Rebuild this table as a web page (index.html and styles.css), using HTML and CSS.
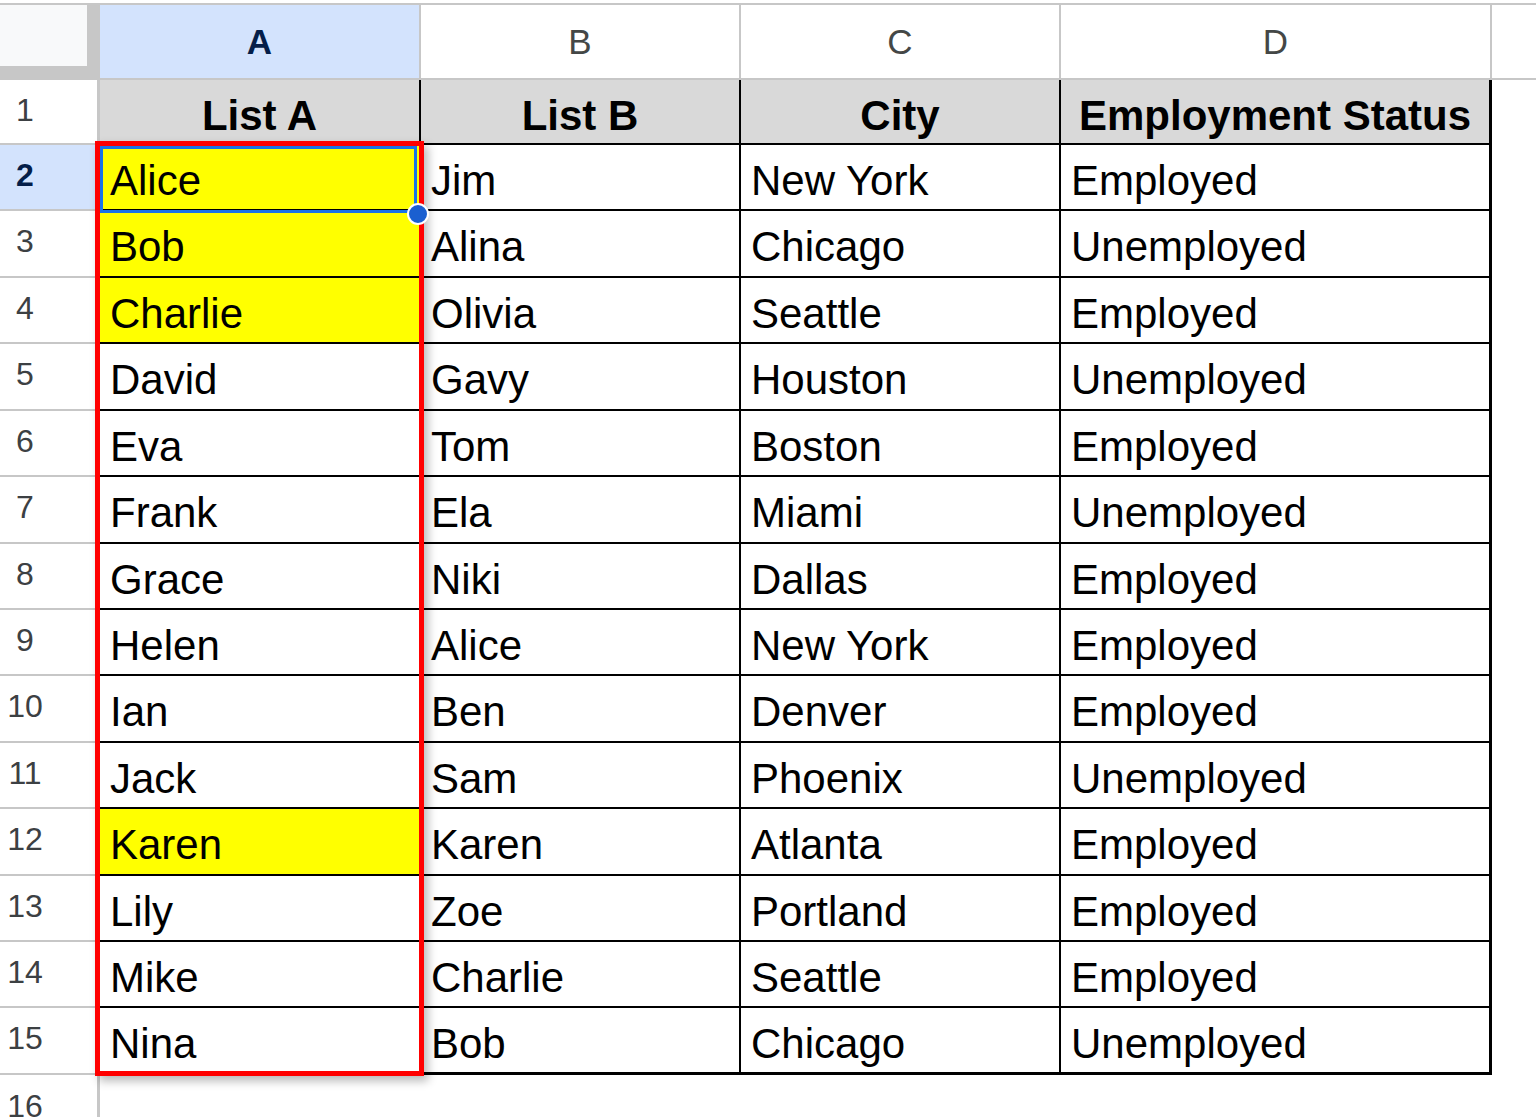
FILE: index.html
```html
<!DOCTYPE html>
<html>
<head>
<meta charset="utf-8">
<link rel="stylesheet" href="styles.css">
</head>
<body>
<div class="sheet">
  <div class="corner"><div class="corner-box"></div></div>
  <div class="ch sel">A</div>
  <div class="ch">B</div>
  <div class="ch">C</div>
  <div class="ch">D</div>
  <div class="ch e"></div>

  <div class="rh">1</div>
  <div class="c h">List A</div>
  <div class="c h">List B</div>
  <div class="c h">City</div>
  <div class="c h d">Employment Status</div>
  <div class="e"></div>

  <div class="rh sel">2</div>
  <div class="c y">Alice</div>
  <div class="c">Jim</div>
  <div class="c">New York</div>
  <div class="c d">Employed</div>
  <div class="e"></div>

  <div class="rh">3</div>
  <div class="c y">Bob</div>
  <div class="c">Alina</div>
  <div class="c">Chicago</div>
  <div class="c d">Unemployed</div>
  <div class="e"></div>

  <div class="rh">4</div>
  <div class="c y">Charlie</div>
  <div class="c">Olivia</div>
  <div class="c">Seattle</div>
  <div class="c d">Employed</div>
  <div class="e"></div>

  <div class="rh">5</div>
  <div class="c">David</div>
  <div class="c">Gavy</div>
  <div class="c">Houston</div>
  <div class="c d">Unemployed</div>
  <div class="e"></div>

  <div class="rh">6</div>
  <div class="c">Eva</div>
  <div class="c">Tom</div>
  <div class="c">Boston</div>
  <div class="c d">Employed</div>
  <div class="e"></div>

  <div class="rh">7</div>
  <div class="c">Frank</div>
  <div class="c">Ela</div>
  <div class="c">Miami</div>
  <div class="c d">Unemployed</div>
  <div class="e"></div>

  <div class="rh">8</div>
  <div class="c">Grace</div>
  <div class="c">Niki</div>
  <div class="c">Dallas</div>
  <div class="c d">Employed</div>
  <div class="e"></div>

  <div class="rh">9</div>
  <div class="c">Helen</div>
  <div class="c">Alice</div>
  <div class="c">New York</div>
  <div class="c d">Employed</div>
  <div class="e"></div>

  <div class="rh">10</div>
  <div class="c">Ian</div>
  <div class="c">Ben</div>
  <div class="c">Denver</div>
  <div class="c d">Employed</div>
  <div class="e"></div>

  <div class="rh">11</div>
  <div class="c">Jack</div>
  <div class="c">Sam</div>
  <div class="c">Phoenix</div>
  <div class="c d">Unemployed</div>
  <div class="e"></div>

  <div class="rh">12</div>
  <div class="c y">Karen</div>
  <div class="c">Karen</div>
  <div class="c">Atlanta</div>
  <div class="c d">Employed</div>
  <div class="e"></div>

  <div class="rh">13</div>
  <div class="c">Lily</div>
  <div class="c">Zoe</div>
  <div class="c">Portland</div>
  <div class="c d">Employed</div>
  <div class="e"></div>

  <div class="rh">14</div>
  <div class="c">Mike</div>
  <div class="c">Charlie</div>
  <div class="c">Seattle</div>
  <div class="c d">Employed</div>
  <div class="e"></div>

  <div class="rh">15</div>
  <div class="c last">Nina</div>
  <div class="c last">Bob</div>
  <div class="c last">Chicago</div>
  <div class="c d last">Unemployed</div>
  <div class="e"></div>

  <div class="rh end">16</div>
  <div class="e"></div>
  <div class="e"></div>
  <div class="e"></div>
  <div class="e"></div>
  <div class="e"></div>
</div>

<div class="range-box"></div>
<div class="active-cell"></div>
<div class="fill-handle"></div>
</body>
</html>
```

FILE: styles.css
```css
html, body {
  margin: 0;
  padding: 0;
  background: #ffffff;
}

body {
  position: relative;
  width: 1536px;
  height: 1117px;
  overflow: hidden;
  font-family: "Liberation Sans", Arial, sans-serif;
  padding-top: 3px;
  box-sizing: border-box;
}

.sheet {
  display: grid;
  grid-template-columns: 100px 321px 320px 320px 431px 1fr;
  grid-template-rows: 77px 65px repeat(14, 66.43px) 1fr;
  height: 1114px;
}

.sheet > div {
  box-sizing: border-box;
  min-width: 0;
  overflow: hidden;
  white-space: nowrap;
}

.corner {
  background: #c7c7c7;
  border-top: 2px solid #c7c7c7;
}

.corner-box {
  width: 87px;
  height: 61px;
  background: #f8f9fa;
}

.ch {
  display: flex;
  align-items: center;
  justify-content: center;
  border-top: 2px solid #c7c7c7;
  border-bottom: 2px solid #c7c7c7;
  border-right: 2px solid #c7c7c7;
  background: #ffffff;
  color: #444746;
  font-size: 35px;
  line-height: 35px;
}

.ch.sel {
  background: #d3e3fd;
  color: #041e49;
  font-weight: bold;
}

.ch.e {
  border-right: none;
}

.rh {
  display: flex;
  align-items: flex-start;
  justify-content: center;
  width: 100px;
  padding-right: 47px;
  padding-top: 14px;
  border-right: 3px solid #c7c7c7;
  border-bottom: 2px solid #c7c7c7;
  background: #ffffff;
  color: #3c4043;
  font-size: 32px;
  line-height: 32px;
}

.rh.sel {
  background: #d3e3fd;
  color: #041e49;
  font-weight: bold;
}

.rh.end {
  border-bottom: none;
  padding-top: 15px;
}

.c {
  border-right: 2px solid #000000;
  border-bottom: 2px solid #000000;
  padding: 15px 0 0 10px;
  font-size: 42px;
  line-height: 42px;
  color: #000000;
  background: #ffffff;
}

.c.h {
  background: #d9d9d9;
  font-weight: bold;
  text-align: center;
  padding-left: 0;
}

.c.d {
  border-right-width: 3px;
}

.c.last {
  border-bottom-width: 3px;
}

.c.y {
  background: #ffff00;
}

.e {
  background: #ffffff;
}

.range-box {
  position: absolute;
  left: 95px;
  top: 141px;
  width: 329px;
  height: 935px;
  box-sizing: border-box;
  border: 5px solid #ff0000;
  box-shadow: 4px 5px 9px rgba(0, 0, 0, 0.28);
}

.active-cell {
  position: absolute;
  left: 100px;
  top: 146px;
  width: 317px;
  height: 67px;
  box-sizing: border-box;
  border: 3px solid #1a73e8;
}

.fill-handle {
  position: absolute;
  left: 407px;
  top: 203px;
  width: 22px;
  height: 22px;
  box-sizing: border-box;
  border-radius: 50%;
  background: #1a5fd0;
  border: 2px solid #ffffff;
}
```
